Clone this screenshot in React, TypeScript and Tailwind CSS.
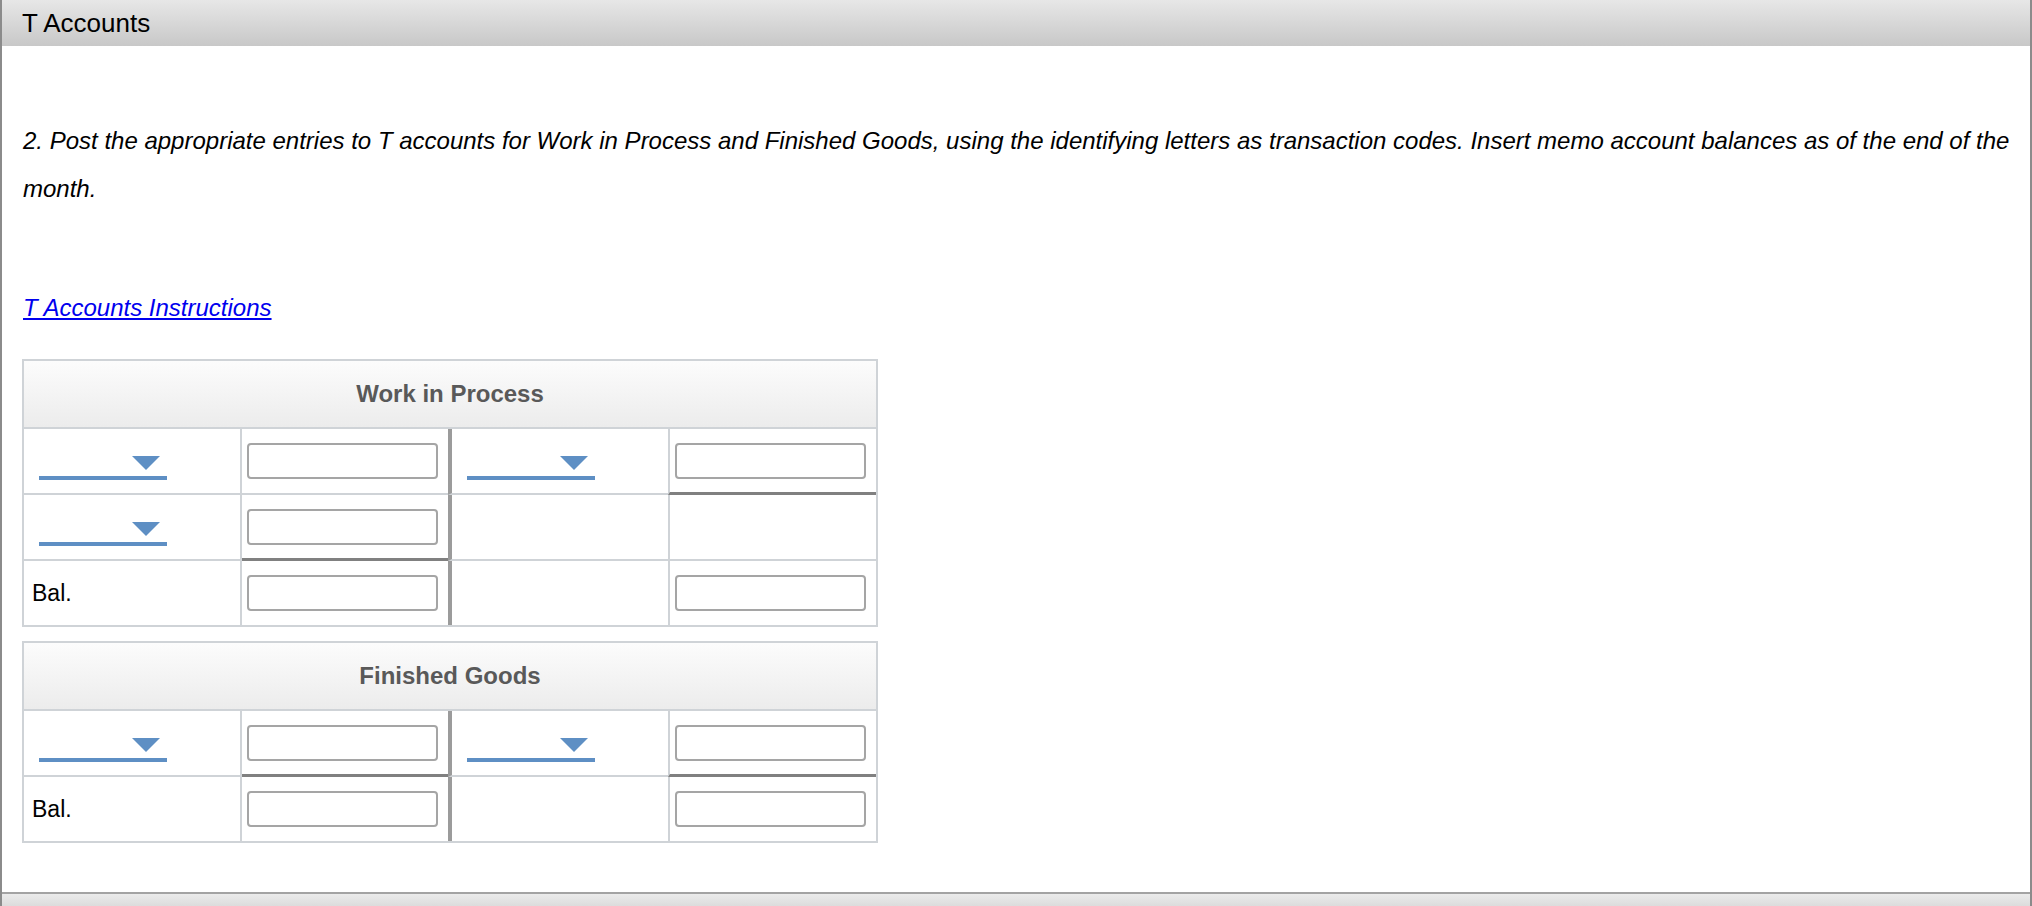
import type { JSX } from 'react'

type CellKind = 'select' | 'input' | 'label' | 'empty'

type CellSpec = {
  kind: CellKind
  total?: boolean
}

type TAccountProps = {
  title: string
  rows: CellSpec[][]
}

const columnClasses = [
  'w-[218px] border-r-2 border-r-[#cfd3d7]',
  'w-[206px]',
  'w-[220px] border-l-4 border-l-[#9b9b9b]',
  'w-[208px] border-l-2 border-l-[#cfd3d7]'
]

function AccountSelect(): JSX.Element {
  return (
    <div className="flex h-full items-end pb-[13px] pl-[15px]">
      <div className="flex w-[128px] justify-end border-b-4 border-b-[#5e8fc4] pb-[6px] pr-[7px]">
        <svg className="block" width="28" height="14" viewBox="0 0 28 14">
          <path d="M0 0H28L14 14Z" fill="#5e8fc4" />
        </svg>
      </div>
    </div>
  )
}

function AmountInput(): JSX.Element {
  return (
    <div className="flex h-full items-center pl-[5px]">
      <input
        type="text"
        className="h-[36px] w-[191px] rounded-[4px] border-2 border-[#a5a5a5] bg-white outline-none"
      />
    </div>
  )
}

function CellContent({ kind }: { kind: CellKind }): JSX.Element | null {
  if (kind === 'select') return <AccountSelect />
  if (kind === 'input') return <AmountInput />
  if (kind === 'label') {
    return <div className="flex h-full items-center pl-[8px] text-[23px] text-black">Bal.</div>
  }
  return null
}

function TAccount({ title, rows }: TAccountProps): JSX.Element {
  return (
    <div className="ml-[20px] w-[856px] border-2 border-[#cfd3d7] bg-white">
      <div className="flex h-[68px] items-center justify-center border-b-2 border-b-[#cfd3d7] bg-gradient-to-b from-[#fcfcfc] to-[#ececec] text-[24px] font-bold text-[#595959]">
        {title}
      </div>
      {rows.map((row, rowIndex) => {
        const isLast = rowIndex === rows.length - 1
        return (
          <div key={rowIndex} className={isLast ? 'flex h-[64px]' : 'flex h-[66px]'}>
            {row.map((cell, colIndex) => {
              let bottom = ''
              if (cell.total) bottom = 'border-b-[3px] border-b-[#808080]'
              else if (!isLast) bottom = 'border-b-2 border-b-[#cfd3d7]'
              return (
                <div key={colIndex} className={`${columnClasses[colIndex]} ${bottom} h-full`}>
                  <CellContent kind={cell.kind} />
                </div>
              )
            })}
          </div>
        )
      })}
    </div>
  )
}

const workInProcessRows: CellSpec[][] = [
  [{ kind: 'select' }, { kind: 'input' }, { kind: 'select' }, { kind: 'input', total: true }],
  [{ kind: 'select' }, { kind: 'input', total: true }, { kind: 'empty' }, { kind: 'empty' }],
  [{ kind: 'label' }, { kind: 'input' }, { kind: 'empty' }, { kind: 'input' }]
]

const finishedGoodsRows: CellSpec[][] = [
  [{ kind: 'select' }, { kind: 'input', total: true }, { kind: 'select' }, { kind: 'input', total: true }],
  [{ kind: 'label' }, { kind: 'input' }, { kind: 'empty' }, { kind: 'input' }]
]

export default function App(): JSX.Element {
  return (
    <div className="h-[906px] overflow-hidden bg-white font-['Liberation_Sans',Arial,Helvetica,sans-serif] text-black">
      <div className="flex h-full flex-col border-x-2 border-x-[#8b8b8b]">
        <div className="flex h-[46px] shrink-0 items-center bg-gradient-to-b from-[#e7e7e7] to-[#c8c8c8] pl-[20px] text-[26px] text-black">
          T Accounts
        </div>

        <p className="mt-[71px] pl-[21px] pr-[10px] text-[24px] italic leading-[48px]">
          2. Post the appropriate entries to T accounts for Work in Process and Finished Goods, using the
          identifying letters as transaction codes. Insert memo account balances as of the end of the
          month.
        </p>

        <div className="mt-[71px] h-[48px] pl-[21px] text-[24px] italic leading-[48px]">
          <a href="#" className="text-[#0000ee] underline">
            T Accounts Instructions
          </a>
        </div>

        <div className="mt-[27px]">
          <TAccount title="Work in Process" rows={workInProcessRows} />
        </div>

        <div className="mt-[14px]">
          <TAccount title="Finished Goods" rows={finishedGoodsRows} />
        </div>

        <div className="mt-[49px] h-[14px] shrink-0 border-t-2 border-t-[#a3a3a3] bg-gradient-to-b from-[#ebebeb] to-[#dcdcdc]" />
      </div>
    </div>
  )
}
